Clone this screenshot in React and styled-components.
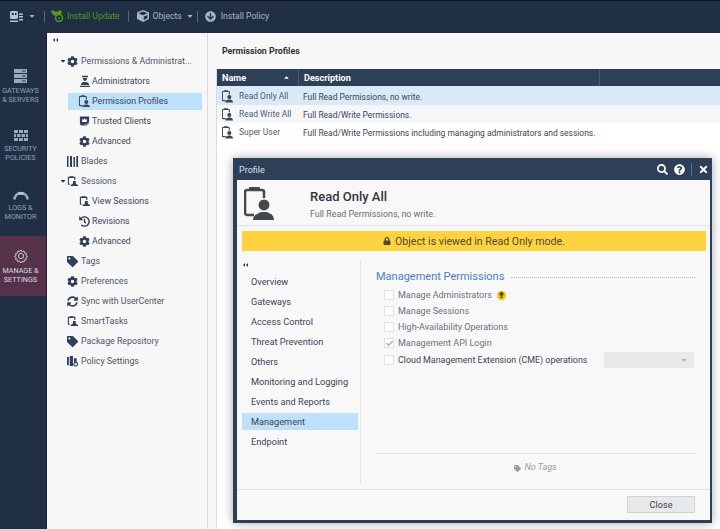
import styled, { createGlobalStyle } from "styled-components";
import {
  FaCog,
  FaCube,
  FaArrowCircleDown,
  FaTag,
  FaSyncAlt,
  FaHistory,
  FaLock,
  FaSearch,
  FaQuestionCircle,
  FaTimes,
  FaCheck,
  FaCaretDown,
  FaCaretUp,
} from "react-icons/fa";

const GlobalStyle = createGlobalStyle`
  html, body {
    margin: 0;
    padding: 0;
    height: 100%;
    overflow: hidden;
    font-family: Roboto, "Noto Sans", sans-serif;
  }
  * { box-sizing: border-box; }
`;

const Page = styled.div`
  position: relative;
  width: 720px;
  height: 529px;
  overflow: hidden;
  display: flex;
  flex-direction: column;
  background: #202f43;
`;

// top toolbar
const TopBar = styled.div`
  height: 33px;
  flex: none;
  display: flex;
  align-items: center;
  background: #202f43;
  border-top: 1px solid #0e1520;
  padding: 0 0 2px 10px;
`;

const ToolItem = styled.div`
  display: flex;
  align-items: center;
  gap: ${({ $gap }) => $gap || 4}px;
  font-size: 8.6px;
  white-space: nowrap;
  color: ${({ $green }) => ($green ? "#4f9a22" : "#a5b6cb")};
`;

const ToolDivider = styled.div`
  width: 1px;
  height: 11px;
  flex: none;
  background: #56677c;
  margin: 0 ${({ $r }) => $r}px 0 ${({ $l }) => $l}px;
`;

const Body = styled.div`
  flex: 1;
  display: flex;
  min-height: 0;
`;

// left dark navigation
const SideNav = styled.div`
  width: 47px;
  flex: none;
  padding-top: 23px;
  background: #202f43;
  border-right: 1px solid #172333;
`;

const SideItem = styled.div`
  height: 60px;
  display: flex;
  flex-direction: column;
  align-items: center;
  justify-content: center;
  gap: 3px;
  padding-right: 5px;
  font-size: 7.2px;
  line-height: 9px;
  text-align: center;
  white-space: nowrap;
  color: ${({ $active }) => ($active ? "#d5dbe4" : "#8ea2b8")};
  background: ${({ $active }) => ($active ? "#55324a" : "transparent")};
`;

// tree panel
const TreePanel = styled.div`
  width: 161px;
  flex: none;
  background: #f7f7f7;
  border-right: 1px solid #dcdcdc;
  padding-top: 2px;
`;

const Collapse = styled.div`
  height: 10px;
  display: flex;
  align-items: center;
  padding-left: ${({ $left }) => $left ?? 6}px;
`;

const TreeList = styled.div`
  margin-top: 6px;
`;

const TreeRow = styled.div`
  position: relative;
  height: 20px;
  display: flex;
  align-items: center;
  gap: ${({ $child }) => ($child ? 2 : 3)}px;
  font-size: 8.8px;
  white-space: nowrap;
  color: ${({ $child }) => ($child ? "#3a4656" : "#4a5666")};
  padding-left: ${({ $child }) => ($child ? 32 : 20)}px;
`;

const TreeHighlight = styled.div`
  display: flex;
  align-items: center;
  gap: 2px;
  height: 17px;
  width: 134px;
  margin-left: -11px;
  padding-left: 11px;
  background: #bde0fb;
`;

const Caret = styled.span`
  position: absolute;
  left: 12px;
  top: 6px;
  color: #2b3a4c;
  font-size: 8px;
  line-height: 8px;
`;

const IconBox = styled.span`
  width: 11px;
  height: 12px;
  flex: none;
  display: inline-flex;
  align-items: center;
  justify-content: center;
  color: #2e4058;
  font-size: 11px;
`;

// main area
const Main = styled.div`
  flex: 1;
  min-width: 0;
  background: #f7f7f7;
  padding: 12px 0 0 8px;
  display: flex;
  flex-direction: column;
`;

const MainTitle = styled.div`
  font-size: 8.8px;
  line-height: 12px;
  font-weight: 700;
  color: #333;
  padding-left: 6px;
  margin-bottom: 12px;
`;

const Table = styled.div`
  flex: 1;
  background: #fff;
  border-left: 1px solid #dcdcdc;
`;

const HeadRow = styled.div`
  height: 17px;
  display: flex;
  background: #2e4058;
  color: #fff;
  font-size: 9.1px;
  font-weight: 700;
`;

const HeadCell = styled.div`
  width: ${({ $w }) => $w}px;
  display: flex;
  align-items: center;
  justify-content: space-between;
  padding: 0 8px 0 5px;
  border-right: 1px solid #46597a;
`;

const Row = styled.div`
  height: 18px;
  display: flex;
  align-items: center;
  padding-top: 1px;
  font-size: 8.45px;
  color: #3a4656;
  background: ${({ $bg }) => $bg};
  &:nth-child(2) { height: 19px; padding-top: 2px; }
`;

const NameCell = styled.div`
  width: 82px;
  flex: none;
  display: flex;
  align-items: center;
  gap: 6px;
  padding-left: 5px;
  white-space: nowrap;
  color: #505c6c;
`;

const DescCell = styled.div`
  padding-left: 4px;
  white-space: nowrap;
`;

// modal
const Modal = styled.div`
  position: absolute;
  left: 233px;
  top: 158px;
  width: 479px;
  height: 365px;
  display: flex;
  flex-direction: column;
  background: #f8f8f8;
  border: solid #2e4058;
  border-width: 0 2px 3px 4px;
  box-shadow: 0 0 10px rgba(0, 0, 0, 0.35);
`;

const ModalBar = styled.div`
  height: 22px;
  flex: none;
  margin-left: -4px;
  margin-right: -2px;
  padding: 0 3px 0 6px;
  display: flex;
  align-items: center;
  background: #2e4058;
  color: #d9e0e8;
  font-size: 9px;
`;

const ModalBarTitle = styled.div`
  flex: 1;
  padding-top: 2px;
`;

const BarIcons = styled.div`
  display: flex;
  align-items: center;
  gap: 6px;
  color: #fff;
  font-size: 11px;
`;

const BarSep = styled.div`
  width: 1px;
  height: 13px;
  background: #5c6e85;
`;

const ModalHead = styled.div`
  height: 46px;
  flex: none;
  display: flex;
  border-bottom: 1px solid #e1e1e6;
  padding: 6px 0 0 7px;
`;

const HeadText = styled.div`
  margin-left: 36px;
`;

const ProfileName = styled.div`
  font-size: 13px;
  line-height: 16px;
  margin-top: 3px;
  font-weight: 500;
  color: #2f3540;
`;

const ProfileDesc = styled.div`
  font-size: 8.9px;
  line-height: 12px;
  margin-top: 3px;
  color: #6b6f76;
`;

const Banner = styled.div`
  height: 20px;
  flex: none;
  margin: 5px 4px 0 5px;
  display: flex;
  align-items: center;
  justify-content: center;
  gap: 4px;
  background: #ffd340;
  color: #4d4a38;
  font-size: 10.6px;
`;

const ModalMain = styled.div`
  flex: 1;
  min-height: 0;
  display: flex;
  margin-top: 8px;
`;

const ModalNav = styled.div`
  width: 124px;
  flex: none;
  height: 224px;
  padding: 1px 0 0 5px;
  border-right: 1px solid #e1e1e6;
`;

const NavList = styled.div`
  margin-top: 1px;
  width: 116px;
`;

const NavRow = styled.div`
  height: 20px;
  display: flex;
  align-items: center;
  padding-left: 9px;
  font-size: 9.2px;
  white-space: nowrap;
  color: #3a4656;
  ${({ $active }) =>
    $active &&
    `
    background: linear-gradient(#f8f8f8 2px, #bde0fb 2px, #bde0fb 19px, #f8f8f8 19px);
  `}
`;

const Content = styled.div`
  flex: 1;
  display: flex;
  flex-direction: column;
  padding: 10px 15px 0 15px;
  height: 224px;
`;

const SectionHead = styled.div`
  display: flex;
  align-items: center;
  gap: 7px;
  font-size: 11px;
  line-height: 15px;
  color: #4a7fc4;
  margin-bottom: 3px;
`;

const Dots = styled.div`
  flex: 1;
  border-bottom: 1px dotted #a9b2bd;
  margin-top: 2px;
`;

const CheckRow = styled.div`
  height: ${({ $tall }) => ($tall ? 18 : 16)}px;
  display: flex;
  align-items: center;
  gap: 4px;
  padding-left: 8px;
  white-space: nowrap;
  font-size: ${({ $dark }) => ($dark ? 8.9 : 9)}px;
  color: ${({ $dark }) => ($dark ? "#3a4656" : "#687280")};
`;

const Box = styled.span`
  width: 10px;
  height: 10px;
  flex: none;
  display: inline-flex;
  align-items: center;
  justify-content: center;
  background: #fff;
  border: 1px solid #e0e2e6;
  color: #a8acb2;
  font-size: 7px;
`;

const Hint = styled.span`
  width: 9px;
  height: 9px;
  margin-left: 1px;
  border-radius: 50%;
  background: #f7c400;
  display: inline-flex;
  align-items: center;
  justify-content: center;
`;

const Select = styled.div`
  width: 90px;
  height: 16px;
  margin-left: auto;
  margin-right: 1px;
  display: flex;
  align-items: center;
  justify-content: flex-end;
  padding-right: 6px;
  background: #e8e9eb;
  color: #a9adb3;
  font-size: 8px;
`;

const TagsBar = styled.div`
  margin-top: auto;
  height: 30px;
  display: flex;
  align-items: flex-start;
  justify-content: center;
  gap: 3px;
  padding: 8px 0 0 0;
  border-top: 1px solid #e1e1e6;
  font-size: 9px;
  font-style: italic;
  color: #9a9da3;
`;

const Footer = styled.div`
  height: 31px;
  flex: none;
  display: flex;
  align-items: flex-start;
  justify-content: flex-end;
  padding: 6px 15px 0 0;
  border-top: 1px solid #e1e1e6;
`;

const CloseButton = styled.button`
  width: 68px;
  height: 17px;
  padding: 0;
  background: #e8e9eb;
  border: 1px solid #cfd2d6;
  font-family: inherit;
  font-size: 9.2px;
  color: #3a4656;
`;

// drawn icons
const CollapseIcon = () => (
  <svg width="5" height="4" viewBox="0 0 5 4" fill="#2e3c4e">
    <path d="M2 0v4L0 2zM5 0v4L3 2z" />
  </svg>
);

const ProfileIcon = ({ size = 11, color = "#3c4550" }) => (
  <svg width={size} height={size * 1.13} viewBox="0 0 30 34">
    <path
      d="M10 29H3a2 2 0 0 1-2-2V6a2 2 0 0 1 2-2h15a2 2 0 0 1 2 2v6"
      fill="none"
      stroke={color}
      strokeWidth={size > 20 ? 2.5 : 3}
    />
    <rect x="5" y="1" width="11" height="4" rx="1" fill={color} />
    <circle cx="20" cy="19" r="5.5" fill={color} />
    <path d="M9 34c0-5 4-6 8-8h6c4 2 7 3 7 8z" fill={color} />
  </svg>
);

const AdminIcon = () => (
  <svg width="10" height="12" viewBox="0 0 10 12" fill="#2e4058">
    <path d="M2 .8h6v1.400H2zM3 3h4c0 2-.8 3-2 3S3 5 3 3z" />
    <path d="M1 9.500c0-1.500 1.500-2.300 3-2.800l1 .9 1-.9c1.500.5 3 1.300 3 2.800v.5H1zM0 10.800h10V12H0z" />
  </svg>
);

const TrustedIcon = () => (
  <svg width="12" height="12" viewBox="0 0 12 12">
    <path d="M1 1h10v7.500L8 11H2.500L1 9.500z" fill="#2e4058" />
    <path d="M3 3.500l1.500 1.500L6 3l1.500 2L9 3.500 8.300 7H3.700z" fill="#fff" />
    <path d="M6 9.500l1.500 1.500L11 7.500" fill="none" stroke="#8fa0b2" strokeWidth="1.200" />
  </svg>
);

const BladesIcon = () => (
  <svg width="11" height="11" viewBox="0 0 11 11" fill="#2e4058">
    <path d="M0 0h1.500v11H0zM3 0h2v11H3zM6.500 1h1.500v10H6.500zM9.300 0H11v11H9.300z" />
  </svg>
);

const SessionIcon = () => (
  <svg width="12" height="12" viewBox="0 0 12 12">
    <path d="M3 9.500H1.500V2h7v3" fill="none" stroke="#2e4058" strokeWidth="1.200" />
    <rect x="3" y="0.800" width="4" height="1.800" fill="#2e4058" />
    <path d="M4 11.500h8v-1.200l-2-1-.5-.8V6H6.500v2.500l-.5.800-2 1z" fill="#2e4058" />
  </svg>
);

const PolicyIcon = () => (
  <svg width="12" height="12" viewBox="0 0 12 12" fill="#2e4058">
    <path d="M0 1.500h2v9H0zM3 .5h3.500v11H3z" />
    <path d="M7.500 3h3v4h-3z" />
    <circle cx="9.500" cy="9.500" r="2" fill="none" stroke="#2e4058" strokeWidth="1.200" />
  </svg>
);

const MonitorIcon = () => (
  <svg width="13" height="11" viewBox="0 0 13 11">
    <rect x="0" y="0" width="8" height="8" rx="1.500" fill="#b5c2d2" />
    <rect x="1.800" y="2" width="2" height="2" fill="#202f43" />
    <rect x="5" y="2" width="1.500" height="2" fill="#202f43" />
    <path d="M0 9.500h8V11H0zM9 2.500h4V4H9zM9 5h4v1.500H9zM9 8h4v1.500H9z" fill="#b5c2d2" />
  </svg>
);

const UpdateIcon = () => (
  <svg width="13" height="12" viewBox="0 0 13 12" fill="#4f9a22">
    <path d="M0 1.500L2 0l2 1.500h3L9 0l2 1.500-1 3H6L5 6 2 5z" />
    <circle cx="8" cy="8" r="3.500" fill="none" stroke="#4f9a22" strokeWidth="1.500" />
    <circle cx="8" cy="8" r="1" />
  </svg>
);

const ServersIcon = () => (
  <svg width="13" height="14" viewBox="0 0 13 14" fill="#98a9bc">
    <path d="M0 0h13v4H0zM0 5h13v4H0zM0 10h13v4H0z" />
    <path d="M8 1.500h3.500v1H8zM8 6.500h3.500v1H8zM8 11.500h3.500v1H8z" fill="#202f43" />
  </svg>
);

const BricksIcon = () => (
  <svg width="14" height="11" viewBox="0 0 14 11" fill="#98a9bc">
    <path d="M0 0h4v3H0zM5 0h4v3H5zM10 0h4v3h-4z" />
    <path d="M0 4h2v3H0zM3 4h3.500v3H3zM7.500 4H11v3H7.500zM12 4h2v3h-2z" />
    <path d="M0 8h4v3H0zM5 8h4v3H5zM10 8h4v3h-4z" />
  </svg>
);

const GaugeIcon = () => (
  <svg width="16" height="9" viewBox="0 0 16 9">
    <path d="M1.500 8.500A6.500 6.500 0 0 1 14.500 8.500" fill="none" stroke="#98a9bc" strokeWidth="2.500" />
    <path d="M5.500 2.800A6.500 6.500 0 0 1 10.500 2.800" fill="none" stroke="#c2cdd9" strokeWidth="2.500" />
  </svg>
);

const BigGear = () => (
  <svg width="14" height="14" viewBox="0 0 24 24" fill="none" stroke="#d5dbe4" strokeWidth="1.500">
    <path d="M12 1.500l2 3 3.200-1 .8 3.300 3.300.8-1 3.200 3 2-3 2 1 3.200-3.300.8-.8 3.300-3.200-1-2 3-2-3-3.200 1-.8-3.300-3.300-.8 1-3.200-3-2 3-2-1-3.200 3.300-.8.8-3.300 3.200 1z" />
    <circle cx="12" cy="12" r="4.500" />
  </svg>
);

const tree = [
  { label: "Permissions & Administrat...", icon: <FaCog />, caret: true },
  { label: "Administrators", icon: <AdminIcon />, child: true },
  { label: "Permission Profiles", icon: <ProfileIcon />, child: true, active: true },
  { label: "Trusted Clients", icon: <TrustedIcon />, child: true },
  { label: "Advanced", icon: <FaCog />, child: true },
  { label: "Blades", icon: <BladesIcon /> },
  { label: "Sessions", icon: <SessionIcon />, caret: true },
  { label: "View Sessions", icon: <SessionIcon />, child: true },
  { label: "Revisions", icon: <FaHistory />, child: true },
  { label: "Advanced", icon: <FaCog />, child: true },
  { label: "Tags", icon: <FaTag /> },
  { label: "Preferences", icon: <FaCog /> },
  { label: "Sync with UserCenter", icon: <FaSyncAlt /> },
  { label: "SmartTasks", icon: <SessionIcon /> },
  { label: "Package Repository", icon: <FaTag /> },
  { label: "Policy Settings", icon: <PolicyIcon /> },
];

const profiles = [
  { name: "Read Only All", desc: "Full Read Permissions, no write.", bg: "#d9e9f7" },
  { name: "Read Write All", desc: "Full Read/Write Permissions.", bg: "#f5f7f9" },
  {
    name: "Super User",
    desc: "Full Read/Write Permissions including managing administrators and sessions.",
    bg: "#fff",
  },
];

const sections = [
  "Overview",
  "Gateways",
  "Access Control",
  "Threat Prevention",
  "Others",
  "Monitoring and Logging",
  "Events and Reports",
  "Management",
  "Endpoint",
];

const App = () => (
  <Page>
    <GlobalStyle />
    <TopBar>
      <ToolItem $gap={5}>
        <MonitorIcon />
        <FaCaretDown size={8} />
      </ToolItem>
      <ToolDivider $l={8} $r={6} />
      <ToolItem $green $gap={3}>
        <UpdateIcon />
        Install Update
      </ToolItem>
      <ToolDivider $l={8} $r={8} />
      <ToolItem>
        <FaCube size={12} />
        Objects
        <FaCaretDown size={8} />
      </ToolItem>
      <ToolDivider $l={3} $r={7} />
      <ToolItem $gap={5}>
        <FaArrowCircleDown size={11} />
        Install Policy
      </ToolItem>
    </TopBar>
    <Body>
      <SideNav>
        <SideItem>
          <ServersIcon />
          <span>
            GATEWAYS
            <br />& SERVERS
          </span>
        </SideItem>
        <SideItem>
          <BricksIcon />
          <span>
            SECURITY
            <br />
            POLICIES
          </span>
        </SideItem>
        <SideItem>
          <GaugeIcon />
          <span>
            LOGS &<br />
            MONITOR
          </span>
        </SideItem>
        <SideItem $active>
          <BigGear />
          <span>
            MANAGE &<br />
            SETTINGS
          </span>
        </SideItem>
      </SideNav>
      <TreePanel>
        <Collapse>
          <CollapseIcon />
        </Collapse>
        <TreeList>
          {tree.map((item, index) => (
            <TreeRow key={index} $child={item.child}>
              {item.caret && (
                <Caret>
                  <FaCaretDown size={8} />
                </Caret>
              )}
              {item.active ? (
                <TreeHighlight>
                  <IconBox>{item.icon}</IconBox>
                  {item.label}
                </TreeHighlight>
              ) : (
                <>
                  <IconBox>{item.icon}</IconBox>
                  {item.label}
                </>
              )}
            </TreeRow>
          ))}
        </TreeList>
      </TreePanel>
      <Main>
        <MainTitle>Permission Profiles</MainTitle>
        <Table>
          <HeadRow>
            <HeadCell $w={82}>
              Name
              <FaCaretUp size={7} />
            </HeadCell>
            <HeadCell $w={301}>Description</HeadCell>
          </HeadRow>
          {profiles.map((profile) => (
            <Row key={profile.name} $bg={profile.bg}>
              <NameCell>
                <ProfileIcon />
                {profile.name}
              </NameCell>
              <DescCell>{profile.desc}</DescCell>
            </Row>
          ))}
        </Table>
      </Main>
    </Body>
    <Modal>
      <ModalBar>
        <ModalBarTitle>Profile</ModalBarTitle>
        <BarIcons>
          <FaSearch />
          <FaQuestionCircle />
          <BarSep />
          <FaTimes />
        </BarIcons>
      </ModalBar>
      <ModalHead>
        <ProfileIcon size={30} color="#45494f" />
        <HeadText>
          <ProfileName>Read Only All</ProfileName>
          <ProfileDesc>Full Read Permissions, no write.</ProfileDesc>
        </HeadText>
      </ModalHead>
      <Banner>
        <FaLock size={8} />
        Object is viewed in Read Only mode.
      </Banner>
      <ModalMain>
        <ModalNav>
          <Collapse $left={1}>
            <CollapseIcon />
          </Collapse>
          <NavList>
            {sections.map((section) => (
              <NavRow key={section} $active={section === "Management"}>
                {section}
              </NavRow>
            ))}
          </NavList>
        </ModalNav>
        <Content>
          <SectionHead>
            Management Permissions
            <Dots />
          </SectionHead>
          <CheckRow>
            <Box />
            Manage Administrators
            <Hint>
              <svg width="5" height="6" viewBox="0 0 5 6" fill="#5a4a00">
                <circle cx="2.500" cy="2" r="2" />
                <rect x="1.300" y="4.500" width="2.400" height="1.500" />
              </svg>
            </Hint>
          </CheckRow>
          <CheckRow>
            <Box />
            Manage Sessions
          </CheckRow>
          <CheckRow>
            <Box />
            High-Availability Operations
          </CheckRow>
          <CheckRow>
            <Box>
              <FaCheck />
            </Box>
            Management API Login
          </CheckRow>
          <CheckRow $tall $dark>
            <Box />
            Cloud Management Extension (CME) operations
            <Select>
              <FaCaretDown />
            </Select>
          </CheckRow>
          <TagsBar>
            <FaTag size={7} style={{ marginTop: 3 }} />
            No Tags
          </TagsBar>
        </Content>
      </ModalMain>
      <Footer>
        <CloseButton>Close</CloseButton>
      </Footer>
    </Modal>
  </Page>
);

export default App;
